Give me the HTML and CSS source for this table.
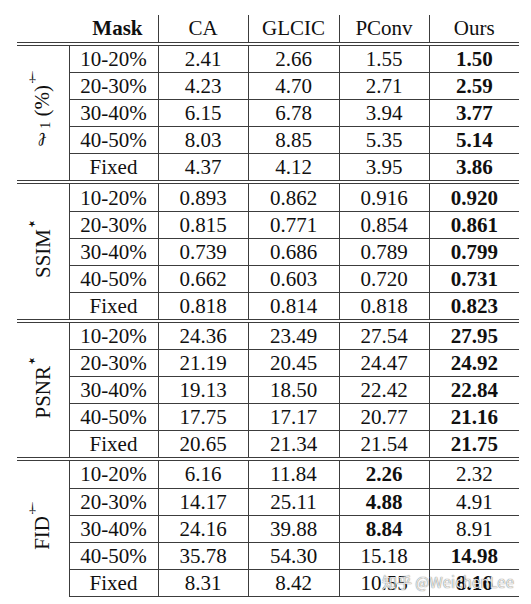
FILE: index.html
```html
<!DOCTYPE html>
<html>
<head>
<meta charset="utf-8">
<link rel="stylesheet" href="styles.css">
</head>
<body>
<div class="page">
<table class="results">
  <colgroup>
    <col class="c-label"><col class="c-mask"><col class="c-num"><col class="c-num2"><col class="c-num"><col class="c-num">
  </colgroup>
  <thead>
    <tr class="head">
      <th class="lab"></th>
      <th class="mask-h">Mask</th>
      <th class="v">CA</th>
      <th class="v">GLCIC</th>
      <th class="v">PConv</th>
      <th class="v">Ours</th>
    </tr>
  </thead>
  <tbody>
    <tr class="first">
      <td class="lab" rowspan="5"><div class="rot"><span class="ell">ℓ</span><sub>1</sub> (%)<sup>†</sup></div></td>
      <td class="m">10-20%</td><td>2.41</td><td>2.66</td><td>1.55</td><td class="b">1.50</td>
    </tr>
    <tr><td class="m">20-30%</td><td>4.23</td><td>4.70</td><td>2.71</td><td class="b">2.59</td></tr>
    <tr><td class="m">30-40%</td><td>6.15</td><td>6.78</td><td>3.94</td><td class="b">3.77</td></tr>
    <tr><td class="m">40-50%</td><td>8.03</td><td>8.85</td><td>5.35</td><td class="b">5.14</td></tr>
    <tr><td class="m">Fixed</td><td>4.37</td><td>4.12</td><td>3.95</td><td class="b">3.86</td></tr>

    <tr class="first">
      <td class="lab" rowspan="5"><div class="rot">SSIM<sup class="star">★</sup></div></td>
      <td class="m">10-20%</td><td>0.893</td><td>0.862</td><td>0.916</td><td class="b">0.920</td>
    </tr>
    <tr><td class="m">20-30%</td><td>0.815</td><td>0.771</td><td>0.854</td><td class="b">0.861</td></tr>
    <tr><td class="m">30-40%</td><td>0.739</td><td>0.686</td><td>0.789</td><td class="b">0.799</td></tr>
    <tr><td class="m">40-50%</td><td>0.662</td><td>0.603</td><td>0.720</td><td class="b">0.731</td></tr>
    <tr><td class="m">Fixed</td><td>0.818</td><td>0.814</td><td>0.818</td><td class="b">0.823</td></tr>

    <tr class="first">
      <td class="lab" rowspan="5"><div class="rot">PSNR<sup class="star">★</sup></div></td>
      <td class="m">10-20%</td><td>24.36</td><td>23.49</td><td>27.54</td><td class="b">27.95</td>
    </tr>
    <tr><td class="m">20-30%</td><td>21.19</td><td>20.45</td><td>24.47</td><td class="b">24.92</td></tr>
    <tr><td class="m">30-40%</td><td>19.13</td><td>18.50</td><td>22.42</td><td class="b">22.84</td></tr>
    <tr><td class="m">40-50%</td><td>17.75</td><td>17.17</td><td>20.77</td><td class="b">21.16</td></tr>
    <tr><td class="m">Fixed</td><td>20.65</td><td>21.34</td><td>21.54</td><td class="b">21.75</td></tr>

    <tr class="first">
      <td class="lab" rowspan="5"><div class="rot">FID<sup>†</sup></div></td>
      <td class="m">10-20%</td><td>6.16</td><td>11.84</td><td class="b">2.26</td><td>2.32</td>
    </tr>
    <tr><td class="m">20-30%</td><td>14.17</td><td>25.11</td><td class="b">4.88</td><td>4.91</td></tr>
    <tr><td class="m">30-40%</td><td>24.16</td><td>39.88</td><td class="b">8.84</td><td>8.91</td></tr>
    <tr><td class="m">40-50%</td><td>35.78</td><td>54.30</td><td>15.18</td><td class="b">14.98</td></tr>
    <tr class="last"><td class="m">Fixed</td><td>8.31</td><td>8.42</td><td>10.55</td><td class="b">8.16</td></tr>
  </tbody>
</table>
<div class="watermark">知乎 @WeichenLee</div>
</div>
</body>
</html>
```
FILE: styles.css
```css
html, body {
  margin: 0;
  padding: 0;
  background: #ffffff;
}

.page {
  position: relative;
  width: 531px;
  height: 604px;
  padding: 15px 0 0 17px;
  box-sizing: border-box;
}

.results {
  border-collapse: collapse;
  table-layout: fixed;
  width: 502px;
  font-family: "Liberation Serif", "Times New Roman", serif;
  font-size: 21px;
  color: #101010;
}

.c-label { width: 52px; }
.c-mask { width: 89px; }
.c-num { width: 90px; }
.c-num2 { width: 91px; }

.results th,
.results td {
  padding: 0;
  text-align: center;
  vertical-align: middle;
  height: 26.1px;
  line-height: 26px;
  font-weight: normal;
  border: 0;
}

.results thead th {
  height: 27px;
  line-height: 27px;
  border-bottom: 4px double #3c3c3c;
}

.results thead th.v {
  border-left: 1px solid #3c3c3c;
}

.results thead th.mask-h {
  font-weight: bold;
  text-align: right;
  padding-right: 15px;
}

.results tbody td {
  border-left: 1px solid #3c3c3c;
  border-top: 1px solid #3c3c3c;
}

.results tbody td.lab {
  border-left: 0;
  padding: 0;
}

.results tbody tr.first td {
  border-top: 4px double #3c3c3c;
}

.results tbody tr.last td {
  border-bottom: 1px solid #3c3c3c;
}

.results td.b {
  font-weight: bold;
}

.rot {
  writing-mode: vertical-rl;
  transform: rotate(180deg);
  line-height: 1;
  margin: 0 auto;
  white-space: nowrap;
  display: inline-block;
}

.rot sub {
  font-size: 14px;
  vertical-align: -4px;
  line-height: 0;
}

.rot sup {
  font-size: 14px;
  vertical-align: 9px;
  line-height: 0;
}

.rot .star {
  font-family: "DejaVu Sans", sans-serif;
  font-size: 9px;
  vertical-align: 11px;
}

.ell {
  font-family: "DejaVu Serif", serif;
  font-style: italic;
  font-size: 19px;
}

.watermark {
  position: absolute;
  left: 382px;
  top: 572px;
  font-family: "Noto Sans CJK SC", "Noto Sans", sans-serif;
  font-size: 15px;
  line-height: 20px;
  color: rgba(255, 255, 255, 0.85);
  text-shadow: 0 0 1px rgba(0, 0, 0, 0.5), 0 0 1px rgba(0, 0, 0, 0.3);
  white-space: nowrap;
}
```
